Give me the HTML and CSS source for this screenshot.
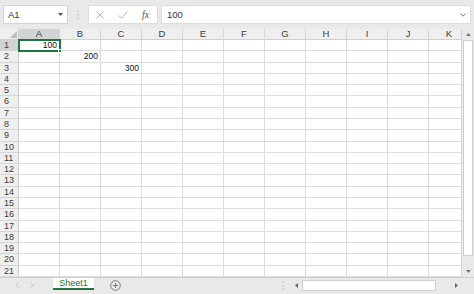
FILE: index.html
```html
<!DOCTYPE html>
<html>
<head>
<meta charset="utf-8">
<link rel="stylesheet" href="styles.css">
</head>
<body>
<div class="app">
  <div class="toolbar">
    <div class="namebox"><span>A1</span><svg class="nb-arrow" width="5" height="3" viewBox="0 0 5 3"><path d="M0 0h5L2.5 3z" fill="#555"/></svg></div>
    <div class="sep"><svg width="2" height="10" viewBox="0 0 2 10"><rect x="0.5" y="1" width="1" height="1" fill="#9a9a9a"/><rect x="0.5" y="4.5" width="1" height="1" fill="#9a9a9a"/><rect x="0.5" y="8" width="1" height="1" fill="#9a9a9a"/></svg></div>
    <div class="fbtns">
      <span class="fb"><svg width="8" height="8" viewBox="0 0 8 8"><path d="M0.5 0.5L7.5 7.5M7.5 0.5L0.5 7.5" stroke="#b4b4b4" stroke-width="1" fill="none"/></svg></span>
      <span class="fb"><svg width="10" height="8" viewBox="0 0 10 8"><path d="M0.5 4.5L3.5 7.2L9.5 0.5" stroke="#b4b4b4" stroke-width="1" fill="none"/></svg></span>
      <span class="fb fx">fx</span>
    </div>
    <div class="formula"><span>100</span><svg width="6" height="4" viewBox="0 0 6 4"><path d="M0.5 0.5L3 3.2L5.5 0.5" stroke="#777" stroke-width="1" fill="none"/></svg></div>
  </div>

  <div class="sheet">
    <div class="grid">
      <div class="cells">
        <div class="corner"><svg width="7" height="7" viewBox="0 0 7 7"><path d="M7 0V7H0z" fill="#bdbdbd"/></svg></div>
        <div class="ch selh">A</div><div class="ch">B</div><div class="ch">C</div><div class="ch">D</div><div class="ch">E</div><div class="ch">F</div><div class="ch">G</div><div class="ch">H</div><div class="ch">I</div><div class="ch">J</div><div class="ch">K</div>

        <div class="rh selh">1</div><div class="c num sel">100</div><div class="c"></div><div class="c"></div><div class="c"></div><div class="c"></div><div class="c"></div><div class="c"></div><div class="c"></div><div class="c"></div><div class="c"></div><div class="c"></div>
        <div class="rh">2</div><div class="c"></div><div class="c num">200</div><div class="c"></div><div class="c"></div><div class="c"></div><div class="c"></div><div class="c"></div><div class="c"></div><div class="c"></div><div class="c"></div><div class="c"></div>
        <div class="rh">3</div><div class="c"></div><div class="c"></div><div class="c num">300</div><div class="c"></div><div class="c"></div><div class="c"></div><div class="c"></div><div class="c"></div><div class="c"></div><div class="c"></div><div class="c"></div>
        <div class="rh">4</div><div class="c"></div><div class="c"></div><div class="c"></div><div class="c"></div><div class="c"></div><div class="c"></div><div class="c"></div><div class="c"></div><div class="c"></div><div class="c"></div><div class="c"></div>
        <div class="rh">5</div><div class="c"></div><div class="c"></div><div class="c"></div><div class="c"></div><div class="c"></div><div class="c"></div><div class="c"></div><div class="c"></div><div class="c"></div><div class="c"></div><div class="c"></div>
        <div class="rh">6</div><div class="c"></div><div class="c"></div><div class="c"></div><div class="c"></div><div class="c"></div><div class="c"></div><div class="c"></div><div class="c"></div><div class="c"></div><div class="c"></div><div class="c"></div>
        <div class="rh">7</div><div class="c"></div><div class="c"></div><div class="c"></div><div class="c"></div><div class="c"></div><div class="c"></div><div class="c"></div><div class="c"></div><div class="c"></div><div class="c"></div><div class="c"></div>
        <div class="rh">8</div><div class="c"></div><div class="c"></div><div class="c"></div><div class="c"></div><div class="c"></div><div class="c"></div><div class="c"></div><div class="c"></div><div class="c"></div><div class="c"></div><div class="c"></div>
        <div class="rh">9</div><div class="c"></div><div class="c"></div><div class="c"></div><div class="c"></div><div class="c"></div><div class="c"></div><div class="c"></div><div class="c"></div><div class="c"></div><div class="c"></div><div class="c"></div>
        <div class="rh">10</div><div class="c"></div><div class="c"></div><div class="c"></div><div class="c"></div><div class="c"></div><div class="c"></div><div class="c"></div><div class="c"></div><div class="c"></div><div class="c"></div><div class="c"></div>
        <div class="rh">11</div><div class="c"></div><div class="c"></div><div class="c"></div><div class="c"></div><div class="c"></div><div class="c"></div><div class="c"></div><div class="c"></div><div class="c"></div><div class="c"></div><div class="c"></div>
        <div class="rh">12</div><div class="c"></div><div class="c"></div><div class="c"></div><div class="c"></div><div class="c"></div><div class="c"></div><div class="c"></div><div class="c"></div><div class="c"></div><div class="c"></div><div class="c"></div>
        <div class="rh">13</div><div class="c"></div><div class="c"></div><div class="c"></div><div class="c"></div><div class="c"></div><div class="c"></div><div class="c"></div><div class="c"></div><div class="c"></div><div class="c"></div><div class="c"></div>
        <div class="rh">14</div><div class="c"></div><div class="c"></div><div class="c"></div><div class="c"></div><div class="c"></div><div class="c"></div><div class="c"></div><div class="c"></div><div class="c"></div><div class="c"></div><div class="c"></div>
        <div class="rh">15</div><div class="c"></div><div class="c"></div><div class="c"></div><div class="c"></div><div class="c"></div><div class="c"></div><div class="c"></div><div class="c"></div><div class="c"></div><div class="c"></div><div class="c"></div>
        <div class="rh">16</div><div class="c"></div><div class="c"></div><div class="c"></div><div class="c"></div><div class="c"></div><div class="c"></div><div class="c"></div><div class="c"></div><div class="c"></div><div class="c"></div><div class="c"></div>
        <div class="rh">17</div><div class="c"></div><div class="c"></div><div class="c"></div><div class="c"></div><div class="c"></div><div class="c"></div><div class="c"></div><div class="c"></div><div class="c"></div><div class="c"></div><div class="c"></div>
        <div class="rh">18</div><div class="c"></div><div class="c"></div><div class="c"></div><div class="c"></div><div class="c"></div><div class="c"></div><div class="c"></div><div class="c"></div><div class="c"></div><div class="c"></div><div class="c"></div>
        <div class="rh">19</div><div class="c"></div><div class="c"></div><div class="c"></div><div class="c"></div><div class="c"></div><div class="c"></div><div class="c"></div><div class="c"></div><div class="c"></div><div class="c"></div><div class="c"></div>
        <div class="rh">20</div><div class="c"></div><div class="c"></div><div class="c"></div><div class="c"></div><div class="c"></div><div class="c"></div><div class="c"></div><div class="c"></div><div class="c"></div><div class="c"></div><div class="c"></div>
        <div class="rh">21</div><div class="c"></div><div class="c"></div><div class="c"></div><div class="c"></div><div class="c"></div><div class="c"></div><div class="c"></div><div class="c"></div><div class="c"></div><div class="c"></div><div class="c"></div>
      </div>
    </div>
    <div class="vscroll">
      <div class="sbtn"><svg width="5" height="3" viewBox="0 0 5 3"><path d="M0 3h5L2.5 0z" fill="#777"/></svg></div>
      <div class="vthumb"></div>
      <div class="vtrack"></div>
      <div class="sbtn"><svg width="5" height="3" viewBox="0 0 5 3"><path d="M0 0h5L2.5 3z" fill="#777"/></svg></div>
    </div>
  </div>

  <div class="tabbar">
    <div class="tabnav">
      <svg width="4" height="6" viewBox="0 0 4 6"><path d="M3.5 0.5L0.8 3L3.5 5.5" stroke="#c2c2c2" fill="none"/></svg>
      <svg width="4" height="6" viewBox="0 0 4 6"><path d="M0.5 0.5L3.2 3L0.5 5.5" stroke="#c2c2c2" fill="none"/></svg>
    </div>
    <div class="tab">Sheet1</div>
    <div class="addsheet"><svg width="11" height="11" viewBox="0 0 11 11"><circle cx="5.5" cy="5.5" r="4.8" stroke="#7a7a7a" fill="none"/><path d="M5.5 3v5M3 5.5h5" stroke="#7a7a7a"/></svg></div>
    <div class="hscroll">
      <div class="hdots"><svg width="2" height="9" viewBox="0 0 2 9"><rect x="0.5" y="0.5" width="1" height="1" fill="#9a9a9a"/><rect x="0.5" y="4" width="1" height="1" fill="#9a9a9a"/><rect x="0.5" y="7.5" width="1" height="1" fill="#9a9a9a"/></svg></div>
      <div class="hbtn"><svg width="3" height="5" viewBox="0 0 3 5"><path d="M3 0v5L0 2.5z" fill="#666"/></svg></div>
      <div class="hthumb"></div>
      <div class="htrack"></div>
      <div class="hbtn"><svg width="3" height="5" viewBox="0 0 3 5"><path d="M0 0v5L3 2.5z" fill="#666"/></svg></div>
    </div>
    <div class="scorner"></div>
  </div>
</div>
</body>
</html>
```
FILE: styles.css
```css
html, body {
  margin: 0;
  padding: 0;
}
body {
  width: 474px;
  height: 294px;
  overflow: hidden;
  background: #e9e9e9;
  font-family: "Liberation Sans", Arial, sans-serif;
  color: #333;
}
.app {
  display: flex;
  flex-direction: column;
  height: 294px;
}

/* toolbar */
.toolbar {
  height: 29px;
  box-sizing: border-box;
  padding: 5px 3px 0 3px;
  display: flex;
  align-items: flex-start;
}
.namebox {
  width: 65px;
  height: 19px;
  box-sizing: border-box;
  background: #fff;
  border: 1px solid #d4d4d4;
  display: flex;
  align-items: center;
  justify-content: space-between;
  padding: 0 4px 0 4px;
  font-size: 9.5px;
  color: #333;
}
.sep {
  width: 20px;
  height: 19px;
  display: flex;
  align-items: center;
  justify-content: center;
}
.fbtns {
  width: 70px;
  height: 19px;
  box-sizing: border-box;
  background: #fff;
  border: 1px solid #dcdcdc;
  display: flex;
  align-items: center;
}
.fb {
  width: 23px;
  display: flex;
  align-items: center;
  justify-content: center;
}
.fx {
  font-family: "Liberation Serif", "Times New Roman", serif;
  font-style: italic;
  font-size: 10px;
  color: #555;
}
.formula {
  flex: 1;
  margin-left: 3px;
  height: 19px;
  box-sizing: border-box;
  background: #fff;
  border: 1px solid #dcdcdc;
  display: flex;
  align-items: center;
  justify-content: space-between;
  padding: 0 4px 0 5px;
  font-size: 9.5px;
  color: #333;
}

/* sheet */
.sheet {
  height: 248px;
  display: flex;
}
.grid {
  width: 461px;
  overflow: hidden;
  background: #fff;
}
.cells {
  width: 470px;
  display: grid;
  grid-template-columns: 19px repeat(11, 41px);
  grid-template-rows: 11px repeat(21, 11.286px);
}
.cells > div {
  box-sizing: border-box;
  overflow: hidden;
  white-space: nowrap;
}
.corner {
  background: #efefef;
  border-right: 1px solid #cfcfcf;
  border-bottom: 1px solid #cfcfcf;
  display: flex;
  align-items: flex-end;
  justify-content: flex-end;
  padding: 0 1px 1px 0;
}
.ch {
  background: #efefef;
  border-right: 1px solid #d6d6d6;
  border-bottom: 1px solid #cfcfcf;
  text-align: center;
  font-size: 9.5px;
  line-height: 10px;
  color: #3c3c3c;
}
.rh {
  background: #efefef;
  border-right: 1px solid #cfcfcf;
  border-bottom: 1px solid #d6d6d6;
  font-size: 9px;
  line-height: 11px;
  padding-left: 4px;
  color: #3c3c3c;
}
.ch.selh, .rh.selh {
  background: #d3d3d3;
}
.ch.selh {
  border-bottom: 1px solid #217346;
}
.rh.selh {
  border-right: 1px solid #217346;
}
.c {
  border-right: 1px solid #dcdcdc;
  border-bottom: 1px solid #dcdcdc;
}
.num {
  text-align: right;
  font-size: 8.5px;
  line-height: 11px;
  padding-right: 2px;
  color: #111;
}
.cells > .sel {
  position: relative;
  overflow: visible;
  outline: 2px solid #217346;
  outline-offset: -1px;
}
.sel::after {
  content: "";
  position: absolute;
  right: -3px;
  bottom: -3px;
  width: 4px;
  height: 4px;
  background: #217346;
  border: 1px solid #fff;
  box-sizing: border-box;
}

/* vertical scrollbar */
.vscroll {
  width: 13px;
  box-sizing: border-box;
  border-left: 1px solid #d4d4d4;
  background: #e9e9e9;
  display: flex;
  flex-direction: column;
}
.sbtn {
  height: 11px;
  display: flex;
  align-items: center;
  justify-content: center;
}
.vthumb {
  height: 216px;
  margin: 0 1px;
  background: #fff;
  border: 1px solid #cfcfcf;
  box-sizing: border-box;
}
.vtrack {
  flex: 1;
}

/* tab bar */
.tabbar {
  height: 17px;
  box-sizing: border-box;
  border-top: 1px solid #cfcfcf;
  display: flex;
  align-items: flex-start;
}
.tabnav {
  width: 53px;
  height: 13px;
  display: flex;
  align-items: center;
  gap: 11px;
  padding-left: 15px;
  box-sizing: border-box;
}
.tab {
  width: 41px;
  height: 12px;
  box-sizing: border-box;
  background: #fff;
  border-bottom: 2px solid #217346;
  color: #217346;
  font-size: 9px;
  line-height: 11px;
  text-align: center;
}
.addsheet {
  margin-left: 16px;
  height: 15px;
  display: flex;
  align-items: center;
}
.hscroll {
  margin-left: 159px;
  flex: 1;
  height: 15px;
  display: flex;
  align-items: center;
}
.hdots {
  width: 11px;
  box-sizing: border-box;
  padding-left: 2px;
  display: flex;
  align-items: center;
}
.hbtn {
  width: 10px;
  height: 11px;
  display: flex;
  align-items: center;
  justify-content: center;
}
.hthumb {
  width: 134px;
  height: 11px;
  margin-left: 1px;
  box-sizing: border-box;
  background: #fff;
  border: 1px solid #cfcfcf;
}
.htrack {
  flex: 1;
}
.scorner {
  width: 13px;
}
```
